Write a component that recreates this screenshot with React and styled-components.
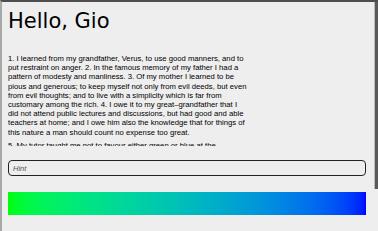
import styled, { createGlobalStyle } from "styled-components";

const GlobalStyle = createGlobalStyle`
  html, body {
    margin: 0;
    padding: 0;
    background: #eeeeee;
  }
`;

const Window = styled.div`
  position: relative;
  box-sizing: border-box;
  height: 231px;
  overflow: hidden;
  background: #eeeeee;
  border-top: 2px solid #4e4e4e;
  border-left: 2px solid #a8a8a8;
  padding: 0 12px 0 6px;
  display: flex;
  flex-direction: column;
`;

const Title = styled.h1`
  margin: 6.5px 0 0;
  font-family: "DejaVu Sans", sans-serif;
  font-weight: normal;
  font-size: 21px;
  line-height: 25px;
  color: #000;
`;

const Story = styled.div`
  margin-top: 20.4px;
  height: 92px;
  overflow: hidden;
  font-family: "Liberation Sans", sans-serif;
  font-size: 7.7px;
  line-height: 9.2px;
  color: #000;
`;

const Paragraph = styled.p`
  margin: 0 0 4px;
  white-space: pre;
`;

const Editor = styled.div`
  margin-top: 14.5px;
  box-sizing: border-box;
  height: 16px;
  border: 1px solid #222;
  border-radius: 4px;
  padding: 0 4px;
  display: flex;
  align-items: center;
  font-family: "Liberation Sans", sans-serif;
  font-size: 7.5px;
  font-style: italic;
  color: #555;
`;

const Gradient = styled.div`
  margin-top: 16px;
  height: 23px;
  background: linear-gradient(in srgb-linear to right, #00ff00, #0000ff);
`;

const ScrollThumb = styled.div`
  position: absolute;
  top: 0;
  left: 372px;
  width: 3px;
  height: 187px;
  background: #5a5a5a;
  border-left: 1px solid #bcbcbc;
`;

const paragraphs = [
  [
    "1. I learned from my grandfather, Verus, to use good manners, and to",
    "put restraint on anger. 2. In the famous memory of my father I had a",
    "pattern of modesty and manliness. 3. Of my mother I learned to be",
    "pious and generous; to keep myself not only from evil deeds, but even",
    "from evil thoughts; and to live with a simplicity which is far from",
    "customary among the rich. 4. I owe it to my great\u2013grandfather that I",
    "did not attend public lectures and discussions, but had good and able",
    "teachers at home; and I owe him also the knowledge that for things of",
    "this nature a man should count no expense too great.",
  ],
  ["5. My tutor taught me not to favour either green or blue at the"],
];

export default function App() {
  return (
    <>
      <GlobalStyle />
      <Window>
        <Title>Hello, Gio</Title>
        <Story>
          {paragraphs.map((p, i) => (
            <Paragraph key={i}>{p.join("\n")}</Paragraph>
          ))}
        </Story>
        <Editor>Hint</Editor>
        <Gradient />
        <ScrollThumb />
      </Window>
    </>
  );
}
